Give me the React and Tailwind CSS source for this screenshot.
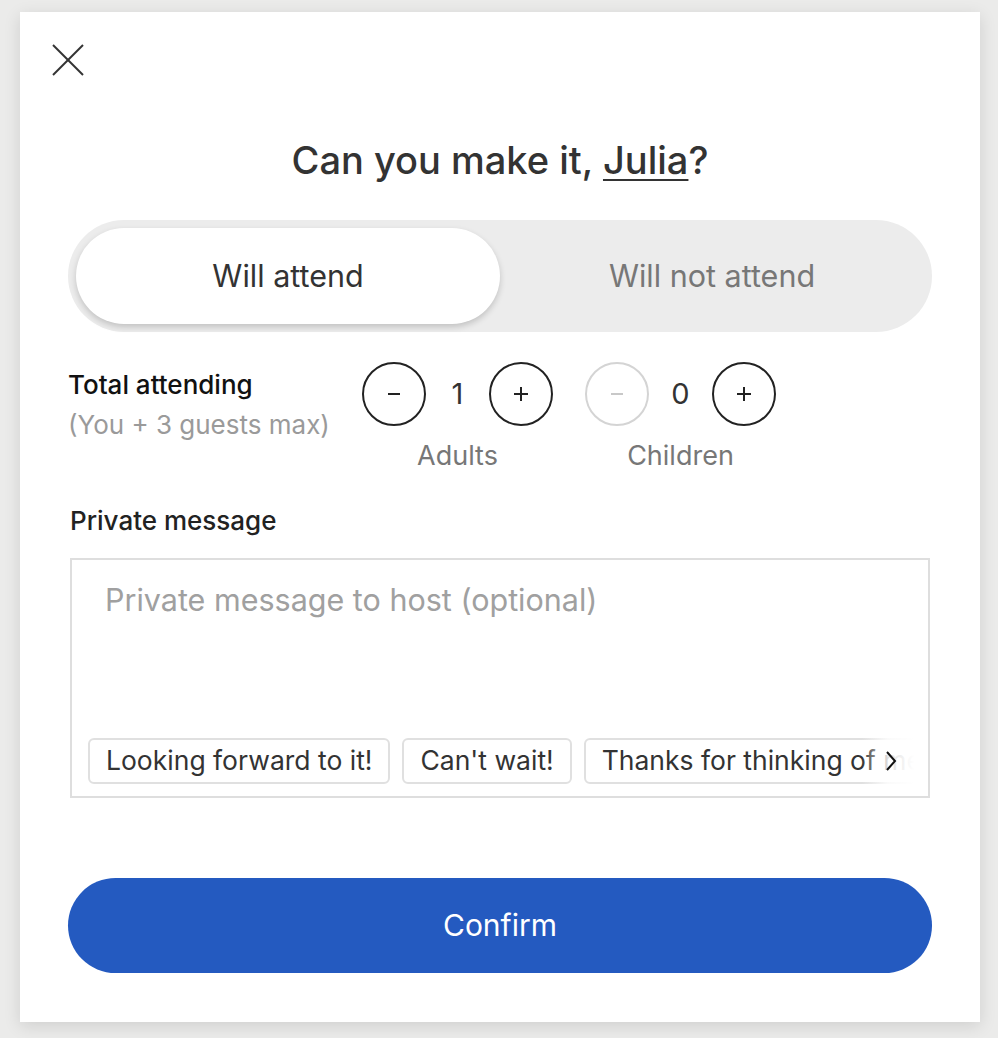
import React from 'react'
import { useState } from 'react'

const font = { fontFamily: 'Inter, "Liberation Sans", Arial, sans-serif' }

const Minus = ({ muted }) => (
    <svg width="14" height="14" viewBox="0 0 14 14">
        <line x1="1" y1="7" x2="13" y2="7" stroke={muted ? '#c8c8c8' : '#222'} strokeWidth="2" />
    </svg>
)

const Plus = () => (
    <svg width="16" height="16" viewBox="0 0 16 16">
        <line x1="1" y1="8" x2="15" y2="8" stroke="#222" strokeWidth="2" />
        <line x1="8" y1="1" x2="8" y2="15" stroke="#222" strokeWidth="2" />
    </svg>
)

const Stepper = ({ value, label, minDisabled }) => (
    <div className='flex flex-col items-center'>
        <div className='flex items-center'>
            <button className={`w-[64px] h-[64px] rounded-full border-2 flex items-center justify-center ${minDisabled ? 'border-[#d4d4d4]' : 'border-[#222]'}`}>
                <Minus muted={minDisabled} />
            </button>
            <span className='w-[63px] text-center text-[29px] text-[#333]'>{value}</span>
            <button className='w-[64px] h-[64px] rounded-full border-2 border-[#222] flex items-center justify-center'>
                <Plus />
            </button>
        </div>
        <span className='mt-[15px] text-[27px] leading-[30px] text-[#777]'>{label}</span>
    </div>
)

const chips = ["Looking forward to it!", "Can't wait!", "Thanks for thinking of me"]

export default function App() {
    const [attend, setAttend] = useState(true)

    return (
        <div className='min-h-screen bg-[#ebebea] pt-[12px] pl-[20px]' style={font}>
            <div className='w-[960px] h-[1010px] bg-white shadow-[0_4px_16px_rgba(0,0,0,0.12)] flex flex-col'>
                <div className='pt-[32px] pl-[32px]'>
                    <svg width="32" height="32" viewBox="0 0 32 32">
                        <line x1="1" y1="1" x2="31" y2="31" stroke="#333" strokeWidth="2" />
                        <line x1="31" y1="1" x2="1" y2="31" stroke="#333" strokeWidth="2" />
                    </svg>
                </div>

                <div className='px-[48px]'>
                    <h1 className='mt-[62px] text-center text-[38px] leading-[44px] font-medium text-[#333]'>
                        Can you make it, <span className='underline decoration-2 underline-offset-[5px]'>Julia</span>?
                    </h1>

                    <div className='mt-[38px] h-[112px] rounded-full bg-[#ececec] p-[8px] flex'>
                        <button
                            onClick={() => setAttend(true)}
                            className={`w-[424px] h-[96px] rounded-full text-[30.5px] ${attend ? 'bg-white text-[#333] shadow-[0_3px_6px_rgba(0,0,0,0.18)]' : 'text-[#777]'}`}>
                            Will attend
                        </button>
                        <button
                            onClick={() => setAttend(false)}
                            className={`flex-1 h-[96px] rounded-full text-[30.5px] ${!attend ? 'bg-white text-[#333] shadow-[0_3px_6px_rgba(0,0,0,0.18)]' : 'text-[#777]'}`}>
                            Will not attend
                        </button>
                    </div>

                    <div className='mt-[30px] flex'>
                        <div className='w-[294px] pt-[7px]'>
                            <div className='text-[26px] leading-[32px] font-medium text-[#111]'>Total attending</div>
                            <div className='mt-[8px] text-[26px] leading-[32px] text-[#9a9a9a]'>(You + 3 guests max)</div>
                        </div>
                        <div className='flex gap-[32px]'>
                            <Stepper value="1" label="Adults" />
                            <Stepper value="0" label="Children" minDisabled />
                        </div>
                    </div>

                    <div className='mt-[34px] pl-[2px] text-[26px] leading-[32px] font-medium text-[#222]'>Private message</div>

                    <div className='mt-[21px] mx-[2px] h-[240px] border-2 border-[#dedede] flex flex-col justify-between'>
                        <div className='pl-[33px] pt-[22px] text-[30.5px] leading-[36px] text-[#a0a0a0]'>
                            Private message to host (optional)
                        </div>
                        <div className='relative pl-[16px] pb-[12px] mr-[14px] overflow-hidden'>
                            <div className='flex gap-[12px] whitespace-nowrap'>
                                {chips.map((c) => (
                                    <span key={c} className='shrink-0 h-[46px] px-[16px] flex items-center rounded-[6px] border-2 border-[#e0e0e0] text-[26.5px] text-[#333]'>
                                        {c}
                                    </span>
                                ))}
                            </div>
                            <div className='absolute right-0 top-0 bottom-[12px] w-[52px] bg-gradient-to-r from-white/0 via-white/85 to-white flex items-center justify-end pr-[17px]'>
                                <svg width="12" height="20" viewBox="0 0 12 20">
                                    <polyline points="2,1 10,10 2,19" fill="none" stroke="#111" strokeWidth="2" />
                                </svg>
                            </div>
                        </div>
                    </div>

                    <button className='mt-[80px] w-full h-[95px] rounded-full bg-[#245ac0] text-white text-[30px]'>
                        Confirm
                    </button>
                </div>
            </div>
        </div>
    )
}
